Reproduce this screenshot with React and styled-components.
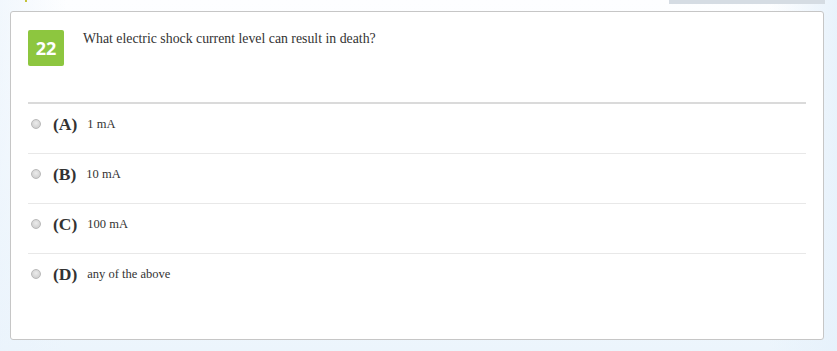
import React from "react";
import styled, { createGlobalStyle } from "styled-components";

const GlobalStyle = createGlobalStyle`
  html, body {
    margin: 0;
    padding: 0;
  }
  body {
    width: 837px;
    height: 351px;
    overflow: hidden;
    background:
      linear-gradient(90deg, rgba(234, 243, 252, 0.6) 0%, rgba(255, 255, 255, 0) 8%, rgba(255, 255, 255, 0) 92%, rgba(230, 241, 251, 0.9) 100%),
      linear-gradient(180deg, #fdfeff 0%, #f7fbfe 45%, #ecf5fc 100%);
    font-family: "Liberation Serif", "Times New Roman", serif;
  }
`;

const Page = styled.div`
  display: flex;
  flex-direction: column;
  height: 351px;
`;

const TopStrip = styled.div`
  display: flex;
  align-items: flex-start;
  height: 4px;
`;

const Tick = styled.span`
  margin-left: 25px;
  width: 2px;
  height: 2px;
  background: #c4c23a;
`;

// the timer panel sits mostly above the viewport, only its lower edge shows
const ElapsedBox = styled.div`
  margin-left: auto;
  margin-right: 12px;
  margin-top: -22px;
  width: 156px;
  height: 26px;
  background: #d5dce3;
  color: #7c9dbf;
  font-family: "Open Sans", sans-serif;
  font-size: 13px;
  text-align: center;
  line-height: 22px;
`;

const Card = styled.div`
  box-sizing: border-box;
  margin: 7px 13px 0 10px;
  height: 329px;
  background: #fff;
  border: 1px solid #c6c6c6;
  border-radius: 3px;
  padding: 18px 17px 0;
`;

const Header = styled.div`
  display: flex;
  align-items: flex-start;
  gap: 19px;
  padding-bottom: 36px;
  border-bottom: 2px solid #dadada;
`;

const Badge = styled.div`
  width: 36px;
  height: 36px;
  flex: none;
  border-radius: 2px;
  background: #8dc63f;
  color: #fff;
  font-family: "Open Sans", sans-serif;
  font-weight: 700;
  font-size: 18px;
  display: flex;
  align-items: center;
  justify-content: center;
`;

const Question = styled.div`
  margin-top: 1px;
  font-size: 13.8px;
  line-height: 15px;
  color: #333;
`;

const Options = styled.div`
  display: flex;
  flex-direction: column;
`;

const Row = styled.label`
  box-sizing: border-box;
  display: flex;
  align-items: center;
  height: 50px;
  padding-bottom: 9px;
  border-bottom: 1px solid ${(p) => (p.$last ? "transparent" : "#e8e8e8")};
  cursor: pointer;
`;

const Radio = styled.input`
  appearance: none;
  margin: 0 12px 0 3px;
  width: 10px;
  height: 10px;
  border-radius: 50%;
  border: 1px solid #b9b9b9;
  box-sizing: border-box;
  background: radial-gradient(circle at 50% 40%, #ececec 0%, #d2d2d2 70%, #c4c4c4 100%);
`;

const Letter = styled.span`
  font-weight: 700;
  font-size: 17.5px;
  color: #333;
  margin-right: 10px;
`;

const Answer = styled.span`
  font-size: 12.5px;
  color: #333;
`;

const options = [
  { key: "A", text: "1 mA" },
  { key: "B", text: "10 mA" },
  { key: "C", text: "100 mA" },
  { key: "D", text: "any of the above" },
];

export default function App() {
  return (
    <Page>
      <GlobalStyle />
      <TopStrip>
        <Tick />
        <ElapsedBox>Elapsed Time</ElapsedBox>
      </TopStrip>
      <Card>
        <Header>
          <Badge>22</Badge>
          <Question>What electric shock current level can result in death?</Question>
        </Header>
        <Options>
          {options.map((o, i) => (
            <Row key={o.key} $last={i === options.length - 1}>
              <Radio type="radio" name="q22" />
              <Letter>({o.key})</Letter>
              <Answer>{o.text}</Answer>
            </Row>
          ))}
        </Options>
      </Card>
    </Page>
  );
}
